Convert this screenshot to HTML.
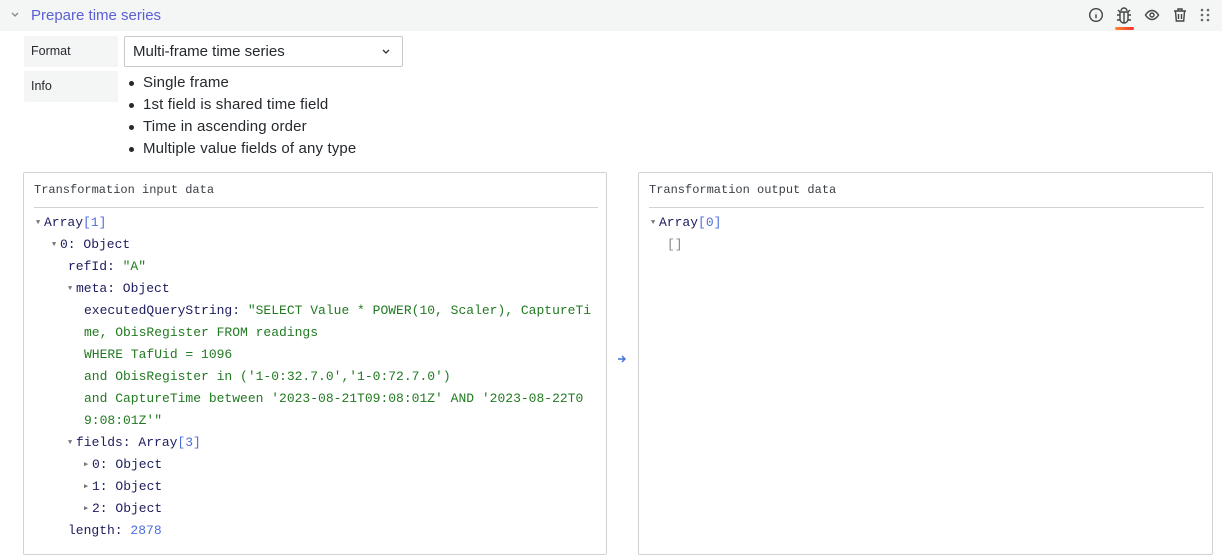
<!DOCTYPE html>
<html><head><style>
*{box-sizing:border-box;margin:0;padding:0}
body{width:1232px;height:560px;background:#fff;font-family:"Liberation Sans",sans-serif;color:#24292e;position:relative;overflow:hidden}
.hdr{position:absolute;left:0;top:0;width:1222px;height:31px;background:#f4f5f5}
.title{position:absolute;left:31px;top:7px;font-size:15px;color:#5b5fd6}
.lbl{position:absolute;left:24px;width:94px;height:31px;background:#f4f5f5;border-radius:2px;font-size:12.5px;color:#24292e;padding:8px 0 0 7px}
.sel{position:absolute;left:124px;top:36px;width:279px;height:31px;border:1px solid #c7c9cc;border-radius:2px;font-size:15px;padding:6px 0 0 8px}
ul{position:absolute;left:143px;top:72px;font-size:15px;letter-spacing:0.15px;line-height:22px;list-style:none}
ul li{position:relative}
ul li:before{content:"";position:absolute;left:-14px;top:9px;width:5px;height:5px;border-radius:50%;background:#24292e}
.panel{position:absolute;top:172px;height:383px;border:1px solid #d0d2d6;border-radius:2px}
.ptitle{position:absolute;left:10px;top:10px;font-family:"Liberation Mono",monospace;font-size:12px;color:#3a3f45}
.pline{position:absolute;left:10px;right:8px;top:34px;border-top:1px solid #d0d2d6}
.code{position:absolute;left:0;top:39px;font-family:"Liberation Mono",monospace;font-size:13px;line-height:22px;color:#1c1c5e}
.code div{position:relative;white-space:pre;height:22px}
.t{position:absolute;font-size:7px;color:#777}
.s{color:#217a21}.n{color:#4d6fdc}.g{color:#888}
</style></head><body>
<div class="hdr">
<svg style="position:absolute;left:10px;top:11px" width="10" height="8"><path d="M2 2l3 3 3-3" stroke="#888" fill="none" stroke-width="1.3"/></svg>
<div class="title">Prepare time series</div>
<svg style="position:absolute;left:1088px;top:7px" width="16" height="16" fill="none" stroke="#444" stroke-width="1.4"><circle cx="8" cy="8" r="6.3"/><path d="M8 7.3v4M8 5v.2"/></svg>
<svg style="position:absolute;left:1115px;top:6px" width="18" height="18" fill="none" stroke="#444" stroke-width="1.4"><path d="M6 5a3 3 0 0 1 6 0M5 6h8v7a4 4 0 0 1-8 0zM9 6v11M2 9h3M13 9h3M2 14h3M13 14h3M3 4l2 2M15 4l-2 2"/></svg>
<div style="position:absolute;left:1115px;top:27px;width:19px;height:3px;background:linear-gradient(90deg,#ff8833,#f5322e);border-radius:2px"></div>
<svg style="position:absolute;left:1144px;top:7px" width="16" height="16" fill="none" stroke="#444" stroke-width="1.4"><path d="M1.5 8s2.5-4.5 6.5-4.5S14.5 8 14.5 8 12 12.5 8 12.5 1.5 8 1.5 8z"/><circle cx="8" cy="8" r="2"/></svg>
<svg style="position:absolute;left:1172px;top:7px" width="16" height="16" fill="none" stroke="#444" stroke-width="1.4"><path d="M2 4h12M6 4V2h4v2M3.5 4l.8 10h7.4l.8-10M6.5 7v5M9.5 7v5"/></svg>
<svg style="position:absolute;left:1199px;top:8px" width="12" height="16" fill="#666"><circle cx="3" cy="2" r="1.3"/><circle cx="9" cy="2" r="1.3"/><circle cx="3" cy="7" r="1.3"/><circle cx="9" cy="7" r="1.3"/><circle cx="3" cy="12" r="1.3"/><circle cx="9" cy="12" r="1.3"/></svg>
</div>
<div class="lbl" style="top:36px">Format</div>
<div class="sel">Multi-frame time series
<svg style="position:absolute;left:256px;top:11px" width="10" height="8"><path d="M2 2l3 3 3-3" stroke="#333" fill="none" stroke-width="1.3"/></svg></div>
<div class="lbl" style="top:71px">Info</div>
<ul><li>Single frame</li><li>1st field is shared time field</li><li>Time in ascending order</li><li>Multiple value fields of any type</li></ul>

<div class="panel" style="left:23px;width:584px">
<div class="ptitle">Transformation input data</div><div class="pline"></div>
<div class="code"><div style="left:20px"><span class="t" style="left:-8px">▼</span>Array<span class="n">[1]</span></div><div style="left:36px"><span class="t" style="left:-8px">▼</span>0: Object</div><div style="left:44px">refId: <span class="s">"A"</span></div><div style="left:52px"><span class="t" style="left:-8px">▼</span>meta: Object</div><div style="left:60px">executedQueryString: <span class="s">"SELECT Value * POWER(10, Scaler), CaptureTi</span></div><div style="left:60px" class="s">me, ObisRegister FROM readings</div><div style="left:60px" class="s">WHERE TafUid = 1096</div><div style="left:60px" class="s">and ObisRegister in ('1-0:32.7.0','1-0:72.7.0')</div><div style="left:60px" class="s">and CaptureTime between '2023-08-21T09:08:01Z' AND '2023-08-22T0</div><div style="left:60px" class="s">9:08:01Z'"</div><div style="left:52px"><span class="t" style="left:-8px">▼</span>fields: Array<span class="n">[3]</span></div><div style="left:68px"><span class="t" style="left:-8px">▶</span>0: Object</div><div style="left:68px"><span class="t" style="left:-8px">▶</span>1: Object</div><div style="left:68px"><span class="t" style="left:-8px">▶</span>2: Object</div><div style="left:44px">length: <span class="n">2878</span></div></div></div>

<svg style="position:absolute;left:617px;top:354px" width="10" height="10" fill="none" stroke="#3d71d9" stroke-width="1.4"><path d="M1 5h7M5 2l3 3-3 3"/></svg>

<div class="panel" style="left:638px;width:575px">
<div class="ptitle">Transformation output data</div><div class="pline"></div>
<div class="code"><div style="left:20px"><span class="t" style="left:-8px">▼</span>Array<span class="n">[0]</span></div><div style="left:28px" class="g">[]</div></div></div>
</body></html>
